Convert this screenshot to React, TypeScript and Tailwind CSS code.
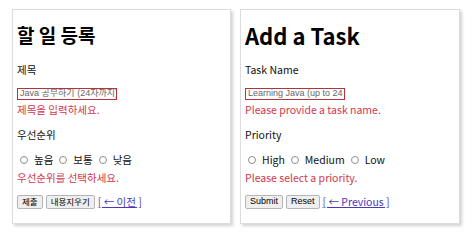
import React from "react";

type P = {
  title: string;
  titleCls: string;
  label1: string;
  placeholder: string;
  err1: string;
  label2: string;
  options: string[];
  err2: string;
  submit: string;
  reset: string;
  link: string;
  btnCls: string;
};

const Radio = ({ text, first }: { text: string; first?: boolean }) => (
  <span className="flex items-center">
    <span className={`${first ? "ml-[3px]" : "ml-[6px]"} mr-[6px] inline-block h-[8px] w-[8px] rounded-full border border-[#8f8f8f] bg-white`} />
    <span>{text}</span>
  </span>
);

const Panel = (p: P) => (
  <div className="flex h-[215px] flex-col border border-[#dcdcdc] bg-white pl-[4px] shadow-[2px_2px_3px_rgba(0,0,0,0.18)]">
    <div className={`mt-[13px] h-[24px] font-bold leading-[24px] text-black ${p.titleCls}`}>{p.title}</div>
    <div className="mt-[16px] h-[14px] text-[10.5px] font-normal leading-[14px] text-[#111]">{p.label1}</div>
    <div className="mt-[11px] flex h-[12px] w-[100px] items-center overflow-hidden whitespace-nowrap border border-[#b8323c] pl-[2px] text-[9px] text-[#666] [font-family:'Liberation_Sans','Noto_Sans_CJK_KR',sans-serif]">
      {p.placeholder}
    </div>
    <div className="mt-[3px] h-[14px] text-[10.5px] leading-[14px] text-[#d5364b]">{p.err1}</div>
    <div className="mt-[11px] h-[14px] text-[10.5px] font-normal leading-[14px] text-[#111]">{p.label2}</div>
    <div className="mt-[11px] flex h-[14px] items-center text-[10.5px] leading-[14px] text-[#111]">
      {p.options.map((o, i) => (
        <Radio key={o} text={o} first={i === 0} />
      ))}
    </div>
    <div className="mt-[4px] h-[14px] text-[10.5px] leading-[14px] text-[#d5364b]">{p.err2}</div>
    <div className="mt-[10px] flex h-[14px] items-center">
      <span className={`flex h-[14px] items-center rounded-[2px] border border-[#b5b5b5] bg-[#efefef] px-[4px] text-black [font-family:'Liberation_Sans','Noto_Sans_CJK_KR',sans-serif] ${p.btnCls}`}>
        {p.submit}
      </span>
      <span className={`ml-[3px] flex h-[14px] items-center rounded-[2px] border border-[#b5b5b5] bg-[#efefef] px-[4px] text-black [font-family:'Liberation_Sans','Noto_Sans_CJK_KR',sans-serif] ${p.btnCls}`}>
        {p.reset}
      </span>
      <span className="ml-[3px] text-[10.5px] leading-[14px] text-[#4b37b8] underline">{p.link}</span>
    </div>
  </div>
);

export default function App() {
  return (
    <div className="h-[238px] w-[474px] bg-white [font-family:'Noto_Sans_CJK_KR','Noto_Sans',sans-serif]">
      <div className="grid grid-cols-[219px_220px] gap-[9px] pl-[12px] pt-[9px]">
        <Panel
          title="할 일 등록"
          titleCls="text-[19px]"
          label1="제목"
          placeholder="Java 공부하기 (24자까지)"
          err1="제목을 입력하세요."
          label2="우선순위"
          options={["높음", "보통", "낮음"]}
          err2="우선순위를 선택하세요."
          submit="제출"
          reset="내용지우기"
          link="[ ← 이전 ]"
          btnCls="text-[8.5px]"
        />
        <Panel
          title="Add a Task"
          titleCls="text-[22px]"
          label1="Task Name"
          placeholder="Learning Java (up to 24"
          err1="Please provide a task name."
          label2="Priority"
          options={["High", "Medium", "Low"]}
          err2="Please select a priority."
          submit="Submit"
          reset="Reset"
          link="[ ← Previous ]"
          btnCls="text-[9px]"
        />
      </div>
    </div>
  );
}
